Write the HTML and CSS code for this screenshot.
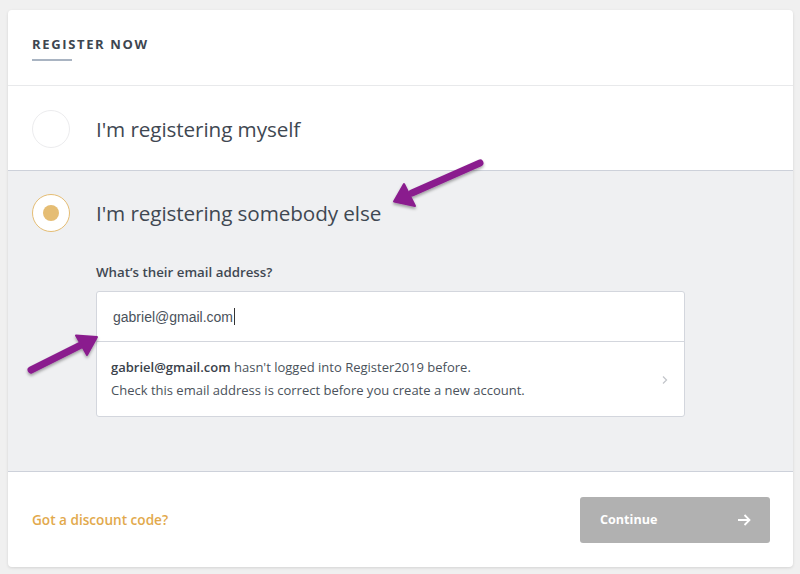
FILE: index.html
```html
<!DOCTYPE html>
<html>
<head>
<meta charset="utf-8">
<link rel="stylesheet" href="styles.css">
</head>
<body>
<div class="card">
  <div class="head">
    <div class="title">REGISTER NOW</div>
    <div class="underline"></div>
  </div>
  <div class="option">
    <span class="radio"></span>
    <span class="option-label">I'm registering myself</span>
  </div>
  <div class="option option-active">
    <div class="option-row">
      <span class="radio radio-on"><span class="dot"></span></span>
      <span class="option-label">I'm registering somebody else</span>
    </div>
    <div class="field">
      <div class="field-label">What’s their email address?</div>
      <div class="box">
        <div class="input">gabriel@gmail.com<span class="caret"></span></div>
        <div class="suggest">
          <div class="suggest-text">
            <div><b>gabriel@gmail.com</b> hasn't logged into Register2019 before.</div>
            <div>Check this email address is correct before you create a new account.</div>
          </div>
          <svg class="chev" width="6" height="10" viewBox="0 0 6 10"><path d="M1 1.5 L4.5 5 L1 8.5" fill="none" stroke="#c4c6cb" stroke-width="1.3"/></svg>
        </div>
      </div>
    </div>
  </div>
  <div class="foot">
    <span class="discount">Got a discount code?</span>
    <span class="btn"><span>Continue</span>
      <svg width="14" height="12" viewBox="0 0 14 12"><path d="M1 6 H12.5 M7.5 1 L12.5 6 L7.5 11" fill="none" stroke="#fff" stroke-width="1.8"/></svg>
    </span>
  </div>
</div>
<svg class="overlay" width="800" height="574" viewBox="0 0 800 574">
  <defs>
    <filter id="sh" x="-20%" y="-20%" width="140%" height="160%">
      <feDropShadow dx="0" dy="2" stdDeviation="1.5" flood-color="#000" flood-opacity="0.35"/>
    </filter>
  </defs>
  <g filter="url(#sh)" fill="#8a1f8e" stroke="#8a1f8e">
    <line x1="480" y1="163" x2="412" y2="193" stroke-width="7" stroke-linecap="round"/>
    <polygon points="394,201.5 404,184 415,206" stroke-width="2" stroke-linejoin="round"/>
    <line x1="31" y1="370" x2="81" y2="345" stroke-width="7" stroke-linecap="round"/>
    <polygon points="97,337 76,335.5 87,355" stroke-width="2" stroke-linejoin="round"/>
  </g>
</svg>
</body>
</html>
```
FILE: styles.css
```css
html, body { margin: 0; padding: 0; }
body {
  background: #f0f0f0;
  width: 800px;
  height: 574px;
  padding: 10px 0 0 8px;
  box-sizing: border-box;
  font-family: "Open Sans", "Noto Sans", sans-serif;
  color: #3f4852;
  position: relative;
  overflow: hidden;
}
.card {
  width: 785px;
  height: 557px;
  background: #fff;
  border-radius: 4px;
  box-shadow: 0 1px 3px rgba(0,0,0,0.12);
  display: flex;
  flex-direction: column;
  overflow: hidden;
}
.head {
  height: 76px;
  flex: none;
  box-sizing: border-box;
  padding: 26px 24px 0;
  border-bottom: 1px solid #e8e9eb;
}
.title {
  font-size: 13px;
  font-weight: 700;
  letter-spacing: 1.65px;
  line-height: 16px;
  color: #3d4650;
}
.underline {
  width: 40px;
  height: 2px;
  background: #a9b4c2;
  margin-top: 7px;
}
.option {
  height: 85px;
  flex: none;
  box-sizing: border-box;
  border-bottom: 1px solid #cdd1da;
  display: flex;
  align-items: center;
  padding: 2px 24px 0;
}
.radio {
  width: 38px;
  height: 38px;
  box-sizing: border-box;
  border: 1px solid #ececee;
  border-radius: 50%;
  background: #fff;
  flex: none;
  display: flex;
  align-items: center;
  justify-content: center;
}
.radio-on { border-color: #e5bd74; }
.dot {
  width: 16px;
  height: 16px;
  border-radius: 50%;
  background: #e5bd74;
}
.option-label {
  margin-left: 26px;
  font-size: 20.7px;
  color: #3f4852;
  letter-spacing: -0.1px;
}
.option-active {
  height: 301px;
  background: #eff0f2;
  display: block;
  padding: 23px 24px 0;
}
.option-row {
  display: flex;
  align-items: center;
}
.field {
  margin-left: 64px;
  margin-top: 31px;
}
.field-label {
  font-size: 13.3px;
  font-weight: 600;
  color: #3f4852;
  line-height: 18px;
}
.box {
  margin-top: 10px;
  width: 589px;
  box-sizing: border-box;
  background: #fff;
  border: 1px solid #d3d6dd;
  border-radius: 3px;
}
.input {
  height: 49px;
  border-bottom: 1px solid #d3d6dd;
  font-family: "Liberation Sans", Arial, sans-serif;
  font-size: 14px;
  color: #4a525b;
  display: flex;
  align-items: center;
  padding-left: 16px;
}
.caret {
  display: inline-block;
  width: 1px;
  height: 17px;
  background: #333;
  margin-left: 1px;
}
.suggest {
  height: 74px;
  display: flex;
  align-items: center;
  padding: 0 16px 0 14px;
}
.suggest-text {
  flex: 1;
  font-size: 13px;
  line-height: 23px;
  color: #4a525b;
}
.suggest-text b { font-weight: 600; color: #3a424b; }
.chev { flex: none; margin-top: 2px; }
.foot {
  flex: 1;
  display: flex;
  align-items: center;
  justify-content: space-between;
  padding: 0 23px 0 24px;
}
.discount {
  color: #e2a94c;
  font-size: 13.6px;
  font-weight: 600;
}
.btn {
  width: 190px;
  height: 46px;
  box-sizing: border-box;
  background: #b1b1b1;
  border-radius: 3px;
  color: #fff;
  font-size: 12.6px;
  font-weight: 700;
  display: flex;
  align-items: center;
  justify-content: space-between;
  padding: 0 19px 0 20px;
}
.overlay {
  position: absolute;
  left: 0;
  top: 0;
  pointer-events: none;
}
```
